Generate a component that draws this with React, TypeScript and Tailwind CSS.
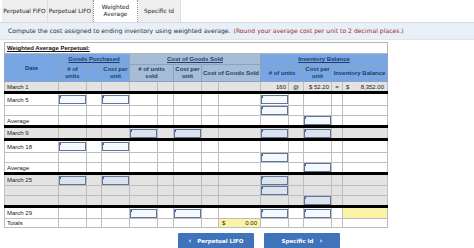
import React from "react";

type Cell = "" | "in" | "yl" | { t: string; a?: "l" | "r" | "c" } | { split: [string, string]; yl?: boolean };

const cols = [54, 28, 15, 28, 28, 16, 28, 17, 42, 28, 15, 28, 11, 45];

type Row = { label: string; h: string; gray?: boolean; thick?: boolean; cells: Record<number, Cell> };

const rows: Row[] = [
  {
    label: "March 1",
    h: "h-[11px]",
    gray: true,
    cells: {
      8: { t: "160", a: "r" },
      9: { t: "@", a: "c" },
      10: { t: "$ 52.20", a: "r" },
      11: { t: "=", a: "c" },
      12: { split: ["$", "8,352.00"] },
    },
  },
  { label: "March 5", h: "h-[13px]", thick: true, cells: { 0: "in", 2: "in", 8: "in" } },
  { label: "", h: "h-[10px]", cells: { 8: "in" } },
  { label: "Average", h: "h-[11px]", cells: { 10: "in" } },
  { label: "March 9", h: "h-[13px]", gray: true, thick: true, cells: { 3: "in", 5: "in", 8: "in", 10: "in" } },
  { label: "March 18", h: "h-[13px]", thick: true, cells: { 0: "in", 2: "in" } },
  { label: "", h: "h-[10px]", cells: { 8: "in" } },
  { label: "Average", h: "h-[11px]", cells: { 10: "in" } },
  { label: "March 25", h: "h-[12px]", gray: true, thick: true, cells: { 0: "in", 2: "in", 8: "in" } },
  { label: "", h: "h-[10px]", gray: true, cells: { 8: "in" } },
  { label: "", h: "h-[11px]", gray: true, cells: { 10: "in" } },
  { label: "March 29", h: "h-[12px]", thick: true, cells: { 3: "in", 5: "in", 8: "in", 10: "in", 12: "yl" } },
  { label: "Totals", h: "h-[9px]", cells: { 7: { split: ["$", "0.00"], yl: true } } },
];

function InputBox({ gray }: { gray?: boolean }) {
  return (
    <div
      className={`relative h-[9px] w-full border border-[#61749a] ${gray ? "bg-[#dde3ec]" : "bg-[#f5f8fc]"}`}
    >
      <div className="absolute left-0 top-0 h-[2px] w-[1px] bg-[#3a63b0]" />
    </div>
  );
}

function Tab({ label, active, w }: { label: React.ReactNode; active?: boolean; w: string }) {
  return (
    <div
      className={`flex h-full items-center justify-center text-center leading-[7px] ${w} ${
        active
          ? "border-x border-dotted border-x-[#9a9a9a] bg-white"
          : "border-r border-r-[#dedede] bg-[#efefef]"
      }`}
    >
      {label}
    </div>
  );
}

export default function App() {
  const groupLeft = new Set([1, 4, 9]);
  return (
    <div className="h-[248px] w-[474px] overflow-hidden bg-white text-[#222]">
      {/* Tabs */}
      <div className="flex h-[23px] items-stretch border-b border-[#d9d9d9] bg-white pl-[2px] font-['DejaVu_Sans',sans-serif] text-[5.8px] text-[#222]">
        <Tab label="Perpetual FIFO" w="w-[46px]" />
        <Tab label="Perpetual LIFO" w="w-[45px]" />
        <Tab
          label={
            <span>
              Weighted
              <br />
              Average
            </span>
          }
          active
          w="w-[45px]"
        />
        <Tab label="Specific Id" w="w-[43px]" />
      </div>

      {/* Instruction */}
      <div className="flex h-[17px] items-center border-b border-[#e3e3e3] bg-[#e7f0f9] pl-[8px] font-['DejaVu_Sans',sans-serif] text-[6.1px] whitespace-nowrap">
        <span className="text-[#2b2b2b]">
          Compute the cost assigned to ending inventory using weighted average.
        </span>
        <span className="ml-[3px] text-[#9c2a2a]">(Round your average cost per unit to 2 decimal places.)</span>
      </div>

      {/* Table */}
      <div className="pl-[4px] pt-[2px]">
        <table className="table-fixed border-collapse border border-[#9b9b9b] font-['Liberation_Sans',Arial,sans-serif] text-[6px] leading-none">
          <colgroup>
            {cols.map((w, i) => (
              <col key={i} style={{ width: w }} />
            ))}
          </colgroup>
          <thead>
            <tr>
              <th
                colSpan={14}
                className="h-[11px] border border-[#b5b5b5] bg-white px-[2px] text-left align-middle text-[6px] font-bold text-[#111] underline"
              >
                Weighted Average Perpetual:
              </th>
            </tr>
            <tr className="text-[#1d3c69]">
              <th rowSpan={2} className="border border-[#8aa3c4] bg-[#78a6e2] font-bold">
                Date
              </th>
              <th colSpan={3} className="h-[11px] border border-[#8aa3c4] bg-[#78a6e2] font-bold underline">
                Goods Purchased
              </th>
              <th colSpan={5} className="border border-[#8aa3c4] bg-[#a7bcd5] font-bold underline">
                Cost of Goods Sold
              </th>
              <th colSpan={5} className="border border-[#8aa3c4] bg-[#78a6e2] font-bold underline">
                Inventory Balance
              </th>
            </tr>
            <tr className="text-[#1d3c69]">
              <th className="h-[17px] border border-[#8aa3c4] bg-[#78a6e2] font-bold leading-[7px]">
                # of
                <br />
                units
              </th>
              <th className="border border-[#8aa3c4] bg-[#78a6e2]" />
              <th className="border border-[#8aa3c4] bg-[#78a6e2] font-bold leading-[7px]">
                Cost per
                <br />
                unit
              </th>
              <th colSpan={2} className="border border-[#8aa3c4] bg-[#a7bcd5] font-bold leading-[7px]">
                # of units
                <br />
                sold
              </th>
              <th className="border border-[#8aa3c4] bg-[#a7bcd5] font-bold leading-[7px]">
                Cost per
                <br />
                unit
              </th>
              <th colSpan={2} className="border border-[#8aa3c4] bg-[#a7bcd5] font-bold">
                Cost of Goods Sold
              </th>
              <th colSpan={2} className="border border-[#8aa3c4] bg-[#78a6e2] font-bold">
                # of units
              </th>
              <th className="border border-[#8aa3c4] bg-[#78a6e2] font-bold leading-[7px]">
                Cost per
                <br />
                unit
              </th>
              <th colSpan={2} className="border border-[#8aa3c4] bg-[#78a6e2] font-bold">
                Inventory Balance
              </th>
            </tr>
          </thead>
          <tbody>
            {rows.map((r, ri) => {
              const h = r.h;
              return (
                <tr key={ri} className={r.gray ? "bg-[#e3e3e3]" : "bg-white"}>
                  <td
                    className={`${h} border border-[#bdbdbd] px-[2px] align-middle text-[#222] ${
                      r.thick ? "border-t-[3px] border-t-black" : ""
                    }`}
                  >
                    {r.label}
                  </td>
                  {Array.from({ length: 13 }).map((_, ci) => {
                    const c = r.cells[ci] ?? "";
                    const base = `${h} border border-[#bdbdbd] align-middle ${
                      groupLeft.has(ci + 1) ? "border-l-[#8c8c8c]" : ""
                    } ${r.thick ? "border-t-[3px] border-t-black" : ""}`;
                    if (c === "in") {
                      return (
                        <td key={ci} className={`${base} p-0`}>
                          <InputBox gray={r.gray} />
                        </td>
                      );
                    }
                    if (c === "yl") {
                      return <td key={ci} className={`${base} bg-[#fbf4a6]`} />;
                    }
                    if (c === "") return <td key={ci} className={base} />;
                    if ("split" in c) {
                      return (
                        <td key={ci} className={`${base} px-[3px] ${c.yl ? "bg-[#fbf4a6]" : ""}`}>
                          <div className="flex justify-between">
                            <span>{c.split[0]}</span>
                            <span>{c.split[1]}</span>
                          </div>
                        </td>
                      );
                    }
                    return (
                      <td
                        key={ci}
                        className={`${base} px-[2px] ${
                          c.a === "r" ? "text-right" : c.a === "c" ? "text-center" : "text-left"
                        }`}
                      >
                        {c.t}
                      </td>
                    );
                  })}
                </tr>
              );
            })}
          </tbody>
        </table>
      </div>

      {/* Buttons */}
      <div className="flex gap-[10px] pl-[178px] pt-[5px] font-['DejaVu_Sans',sans-serif] text-[5.5px] font-bold text-white">
        <div className="flex h-[16px] w-[76px] items-center justify-center gap-[6px] rounded-[1px] bg-[#3f74ba]">
          <span className="text-[7px]">‹</span>
          <span>Perpetual LIFO</span>
        </div>
        <div className="flex h-[16px] w-[76px] items-center justify-center gap-[6px] rounded-[1px] bg-[#3f74ba]">
          <span>Specific Id</span>
          <span className="text-[7px]">›</span>
        </div>
      </div>
    </div>
  );
}
